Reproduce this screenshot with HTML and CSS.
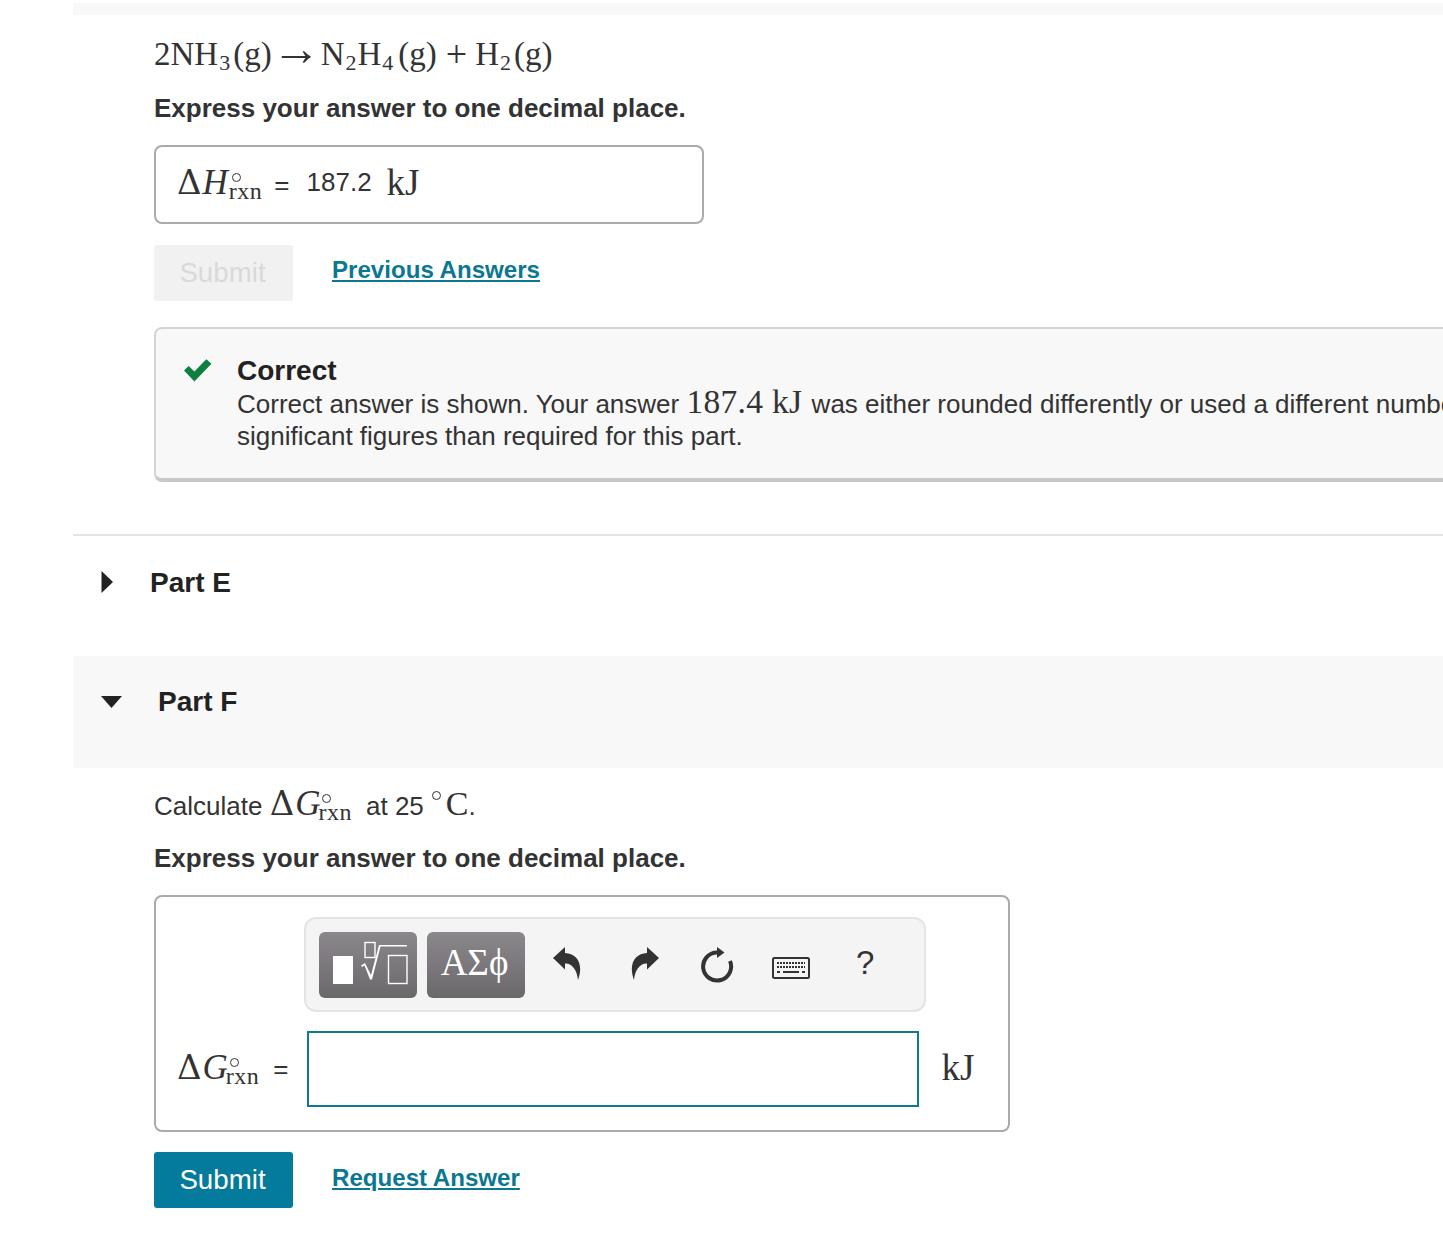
FILE: index.html
```html
<!DOCTYPE html>
<html lang="en">
<head>
<meta charset="utf-8">
<title>Part F</title>
<link rel="stylesheet" href="styles.css">
</head>
<body>
<main class="page">
  <div class="top-band"></div>
  <section class="part-body part-d">
    <p class="equation">2NH<sub>3</sub><span class="paren">(g)</span><span class="arrow">→</span>N<sub>2</sub>H<sub>4</sub><span class="paren paren-wide">(g)</span><span class="plus">+</span>H<sub>2</sub><span class="paren">(g)</span></p>
    <p class="instruction">Express your answer to one decimal place.</p>
    <div class="answer-box">
      <span class="math delta-label"><span class="delta">Δ</span><i class="var">H</i><span class="supsub"><span class="deg"></span><span class="rxn">rxn</span></span></span>
      <span class="equals">=</span>
      <span class="value">187.2</span>
      <span class="math unit">kJ</span>
    </div>
    <div class="actions">
      <button class="btn btn-disabled" type="button">Submit</button>
      <a class="action-link" href="#">Previous Answers</a>
    </div>
    <div class="feedback">
      <svg class="check" viewBox="0 0 28 24" aria-hidden="true"><path d="M1 13 L5.5 8.5 L11 14 L22.5 2 L27.5 6.5 L11 23.5 Z" fill="#0e7f3f"/></svg>
      <div class="feedback-text">
        <div class="feedback-title">Correct</div>
        <div class="feedback-line">Correct answer is shown. Your answer <span class="math inline-val">187.4 kJ</span> was either rounded differently or used a different number of</div>
        <div class="feedback-line">significant figures than required for this part.</div>
      </div>
    </div>
  </section>
  <div class="part-row part-e">
    <svg class="caret-right" viewBox="0 0 12 22" aria-hidden="true"><path d="M0.5 0 L12 11 L0.5 22 Z" fill="#222"/></svg>
    <h2 class="part-title">Part E</h2>
  </div>
  <div class="part-row part-f">
    <svg class="caret-down" viewBox="0 0 21 12" aria-hidden="true"><path d="M0 0 H21 L10.5 12 Z" fill="#222"/></svg>
    <h2 class="part-title">Part F</h2>
  </div>
  <section class="part-body part-f-body">
    <p class="calc">Calculate <span class="math delta-label calc-label"><span class="delta">Δ</span><i class="var">G</i><span class="supsub supsub-g"><span class="deg"></span><span class="rxn">rxn</span></span></span><span class="calc-at">at 25</span><span class="math temp"><span class="temp-deg"></span>C</span>.</p>
    <p class="instruction">Express your answer to one decimal place.</p>
    <div class="editor-box">
      <div class="toolbar">
        <button class="tool-dark tool-templates" type="button" aria-label="Templates">
          <svg viewBox="0 0 98 66" width="98" height="66" aria-hidden="true">
            <rect x="14" y="24" width="20" height="28" fill="#fff"/>
            <rect x="46" y="10.5" width="10" height="15" fill="none" stroke="#fff" stroke-width="1.4"/>
            <path d="M42 33.5 L46 31 L52 43 L60 13 H88 V14.5 H61.5 L53 47.5 H51 L45.5 33.5 L43 35 Z" fill="#fff"/>
            <rect x="69.5" y="23.5" width="18.5" height="28" fill="none" stroke="#fff" stroke-width="1.4"/>
          </svg>
        </button>
        <button class="tool-dark tool-greek" type="button">ΑΣϕ</button>
        <svg class="tool-icon undo" viewBox="0 0 29 33" aria-hidden="true"><path d="M0 11 L12 0 V6 C24 6.500 31 17 25 33 C24 23 19 16 12 16.500 V22.500 Z" fill="#333"/></svg>
        <svg class="tool-icon redo" viewBox="0 0 29 33" aria-hidden="true"><path d="M29 11 L17 0 V6 C5 6.500 -2 17 4 33 C5 23 10 16 17 16.500 V22.500 Z" fill="#333"/></svg>
        <svg class="tool-icon reset" viewBox="0 0 34 37" aria-hidden="true"><path d="M17 5.500 A14 14 0 1 0 30 14" fill="none" stroke="#333" stroke-width="4"/><path d="M17 0 L24.500 5.500 L17 11 Z" fill="#333"/></svg>
        <svg class="tool-icon keyboard" viewBox="0 0 38 22" aria-hidden="true"><rect x="1" y="1" width="36" height="20" rx="1.500" fill="#f4f4f4" stroke="#333" stroke-width="2"/><path d="M5 6 H33 M5 10 H33" stroke="#333" stroke-width="2" stroke-dasharray="2 1"/><path d="M5 15 H8 M11 15 H27 M30 15 H33" stroke="#333" stroke-width="2"/></svg>
        <span class="tool-help">?</span>
      </div>
      <div class="input-row">
        <span class="math delta-label"><span class="delta">Δ</span><i class="var">G</i><span class="supsub supsub-g"><span class="deg"></span><span class="rxn">rxn</span></span></span>
        <span class="equals">=</span>
        <div class="text-input"></div>
        <span class="math unit">kJ</span>
      </div>
    </div>
    <div class="actions actions-last">
      <button class="btn btn-primary" type="button">Submit</button>
      <a class="action-link" href="#">Request Answer</a>
    </div>
  </section>
</main>
</body>
</html>
```
FILE: styles.css
```css
html, body {
  margin: 0;
  padding: 0;
  height: 1233px;
  overflow: hidden;
  background: #fff;
}
body {
  font-family: "Liberation Sans", Arial, sans-serif;
  color: #333;
}
.page {
  width: 1500px;
  padding: 3px 0 0 73px;
  box-sizing: border-box;
}
.top-band { height: 12px; background: #f8f8f8; }
.part-body { padding-left: 81px; }
.part-d { height: 521px; border-bottom: 2px solid #e4e4e4; box-sizing: border-box; padding-top: 3px; }
p { margin: 0; }
.math { font-family: "Liberation Serif", "Times New Roman", serif; }
.equation {
  font-family: "Liberation Serif", serif;
  font-size: 33px;
  line-height: 73px;
  height: 71px;
  white-space: nowrap;
}
.equation sub { font-size: 22px; line-height: 0; vertical-align: -5px; margin: 0 1px; }
.paren { margin-left: 2px; }
.paren-wide { margin-left: 4px; }
.arrow { font-size: 49px; line-height: 0; }
.plus { font-size: 38px; line-height: 0; margin: 0 8px 0 9px; vertical-align: -2px; }
.instruction {
  font-size: 26px;
  line-height: 38px;
  font-weight: 700;
  white-space: nowrap;
  color: #333;
}
.answer-box {
  width: 550px;
  height: 79px;
  box-sizing: border-box;
  margin-top: 18px;
  border: 2px solid #aaa;
  border-radius: 8px;
  padding: 0 0 4px 21px;
  display: flex;
  align-items: center;
}
.delta-label { font-size: 35px; display: inline-flex; align-items: baseline; line-height: 40px; }
.delta { font-family: "DejaVu Serif", serif; font-size: 34px; margin-right: 1px; }
.supsub { display: inline-block; position: relative; font-size: 24px; line-height: 24px; margin-left: 1px; }
.supsub-g { margin-left: -2px; }
.deg {
  position: absolute;
  left: 3px;
  top: -1px;
  width: 9px;
  height: 9px;
  box-sizing: border-box;
  border: 1.500px solid #333;
  border-radius: 50%;
}
.supsub-g .deg { left: 4px; }
.rxn { display: inline-block; position: relative; top: 5px; letter-spacing: 0.500px; }
.equals { font-size: 26px; margin: 5px 17px 0 12px; }
.value { font-size: 26px; }
.unit { font-size: 37px; margin-left: 15px; }
.actions { display: flex; align-items: center; margin-top: 21px; gap: 39px; }
.btn {
  width: 139px;
  height: 56px;
  border: 0;
  border-radius: 3px;
  font-family: inherit;
  font-size: 27.700px;
  padding: 0 2px 0 0;
}
.btn-disabled { background: #f1f1f1; color: #d9d9d9; }
.btn-primary { background: #047a9c; color: #fff; }
.action-link {
  color: #0b7791;
  font-size: 24.100px;
  font-weight: 700;
  text-decoration: underline;
  margin-top: -6px;
}
.feedback {
  width: 1350px;
  height: 155px;
  box-sizing: border-box;
  margin-top: 26px;
  border: 2px solid #d4d4d4;
  border-bottom: 4px solid #c8c8c8;
  border-radius: 8px;
  background: #f8f8f8;
  padding: 25px 0 0 27px;
  display: flex;
  gap: 25px;
}
.check { width: 29px; height: 25px; margin-top: 3px; flex: none; }
.feedback-text { font-size: 26px; line-height: 32px; white-space: nowrap; color: #333; }
.feedback-title { font-weight: 700; font-size: 28px; color: #222; line-height: 34px; }
.feedback-line { height: 32px; }
.inline-val { font-size: 33.500px; line-height: 0; letter-spacing: 0.300px; margin-right: 2px; }
.part-row { display: flex; align-items: center; }
.part-e { height: 120px; padding: 0 0 26px 28px; box-sizing: border-box; gap: 37px; }
.part-f { height: 112px; background: #f8f8f8; padding: 0 0 20px 28px; gap: 37px; box-sizing: border-box; }
.caret-right { width: 12px; height: 22px; margin-top: -3px; }
.caret-down { width: 21px; height: 12px; margin-right: -1px; }
.part-title { margin: 0; font-size: 28px; font-weight: 700; color: #222; }
.part-f-body { padding-top: 15px; }
.calc { font-size: 26px; line-height: 38px; height: 56px; white-space: nowrap; }
.calc-at { margin-left: 14px; }
.temp { font-size: 34px; line-height: 0; margin-left: 8px; }
.temp-deg {
  display: inline-block;
  width: 9px;
  height: 9px;
  box-sizing: border-box;
  border: 1.500px solid #333;
  border-radius: 50%;
  vertical-align: 15px;
  margin-right: 5px;
}
.editor-box {
  width: 856px;
  height: 237px;
  box-sizing: border-box;
  margin-top: 18px;
  border: 2px solid #aaa;
  border-radius: 8px;
  padding: 20px 0 0 21px;
}
.toolbar {
  width: 622px;
  height: 95px;
  box-sizing: border-box;
  margin-left: 127px;
  background: #f4f4f4;
  border: 2px solid #e4e4e4;
  border-radius: 12px;
  display: flex;
  align-items: center;
  padding-left: 13px;
}
.tool-dark {
  width: 98px;
  height: 66px;
  border: 0;
  border-radius: 6px;
  background: linear-gradient(#8b878c, #6b686c);
  color: #fff;
  padding: 0;
  flex: none;
}
.tool-templates { margin-right: 10px; }
.tool-templates svg { display: block; }
.tool-greek { font-family: "Liberation Serif", serif; font-size: 37px; padding: 0 3px 4px 0; }
.tool-icon { flex: none; }
.undo { width: 29px; height: 33px; margin: -2px 0 0 28px; }
.redo { width: 29px; height: 33px; margin: -2px 0 0 48px; }
.reset { width: 34px; height: 37px; margin: 2px 0 0 41px; }
.keyboard { width: 38px; height: 22px; margin: 6px 0 0 38px; }
.tool-help { font-size: 33px; margin: -3px 0 0 46px; color: #333; }
.input-row { display: flex; align-items: center; margin-top: 19px; }
.text-input {
  width: 612px;
  height: 76px;
  box-sizing: border-box;
  border: 2px solid #0e7a8f;
  background: #fff;
}
.input-row .delta-label { margin-top: -4px; }
.input-row .equals { margin: 0 18px 0 14px; }
.input-row .unit { margin: -4px 0 0 23px; }
.actions-last { margin-top: 20px; }
.actions-last .action-link { margin-top: -4px; }
```
